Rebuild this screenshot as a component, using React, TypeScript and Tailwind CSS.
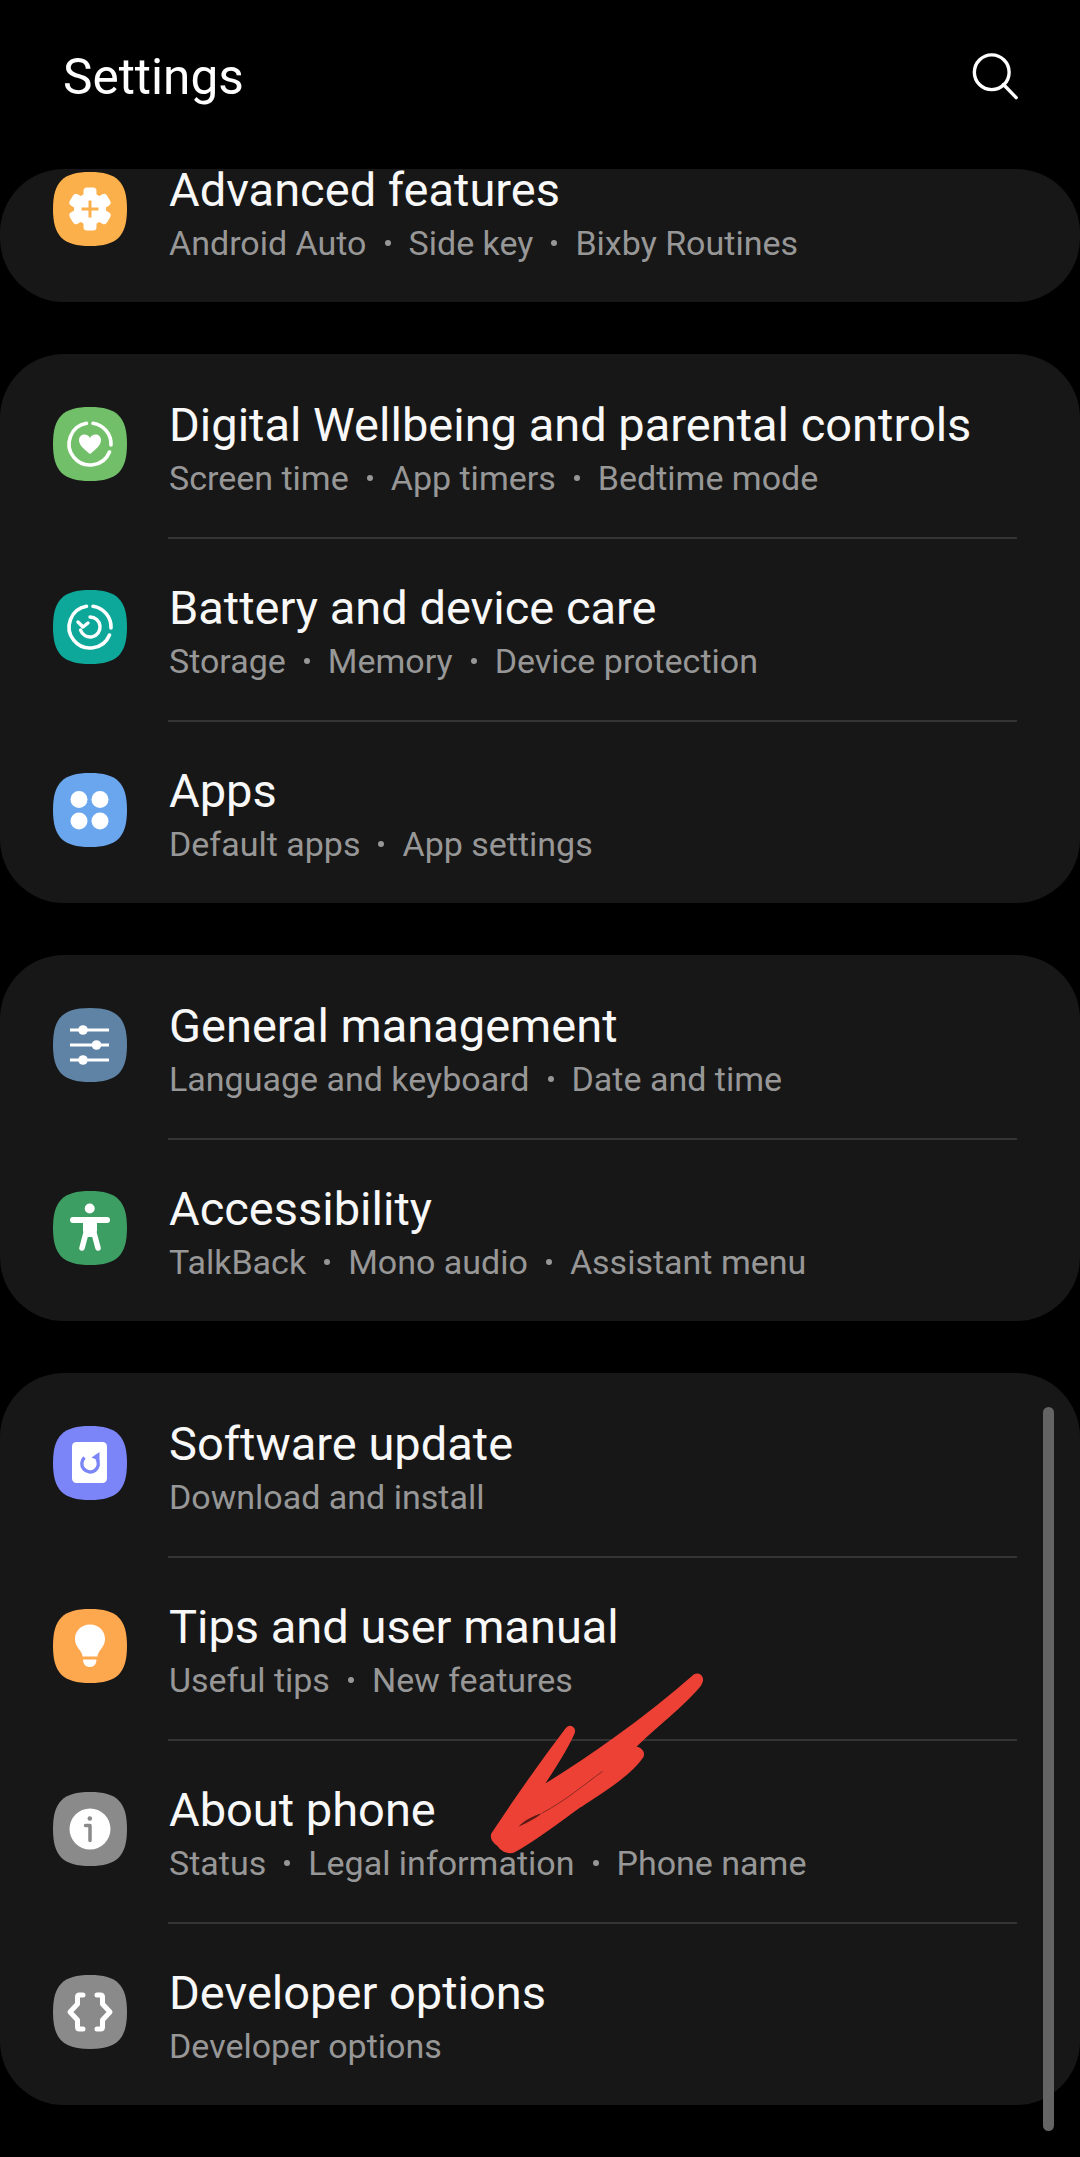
import type { ReactNode } from "react";

type Row = {
  title: string;
  sub: string[];
  icon: ReactNode;
};

function Squircle({ color, children }: { color: string; children?: ReactNode }) {
  return (
    <svg width="74" height="74" viewBox="0 0 74 74" className="mb-[3px] shrink-0">
      <path
        d="M37 0C64 0 74 10 74 37C74 64 64 74 37 74C10 74 0 64 0 37C0 10 10 0 37 0Z"
        fill={color}
      />
      {children}
    </svg>
  );
}

const ring = (
  <g fill="none" stroke="#fff" strokeWidth="3.6" strokeLinecap="round">
    <path d="M40 16.200A21 21 0 0 1 58 38" />
    <path d="M56.500 45A21 21 0 1 1 33.500 16.300" />
  </g>
);

const advancedIcon = (
  <Squircle color="#fbb04b">
    <g fill="#fff">
      <circle cx="37" cy="37" r="16" />
      {[0, 60, 120, 180, 240, 300].map((a) => (
        <rect key={a} x="30.500" y="15.500" width="13" height="13" rx="3.500" transform={`rotate(${a} 37 37)`} />
      ))}
    </g>
    <path d="M37 28.500V45.500M28.500 37H45.500" stroke="#fbb04b" strokeWidth="3" />
  </Squircle>
);

const wellbeingIcon = (
  <Squircle color="#72bf69">
    {ring}
    <path
      d="M37 47C31 42 26 38.500 26 33C26 29.500 28.800 27.500 31.500 27.500C33.800 27.500 36 28.800 37 31C38 28.800 40.200 27.500 42.500 27.500C45.200 27.500 48 29.500 48 33C48 38.500 43 42 37 47Z"
      fill="#fff"
    />
  </Squircle>
);

const batteryIcon = (
  <Squircle color="#0da899">
    {ring}
    <g fill="none" stroke="#fff" strokeWidth="3.400" strokeLinecap="round" strokeLinejoin="round">
      <path d="M37 27A10 10 0 1 1 27.500 40" />
      <path d="M25 32L30 37L35 33" />
    </g>
  </Squircle>
);

const appsIcon = (
  <Squircle color="#6aa6ee">
    <g fill="#fff">
      <circle cx="26" cy="26.500" r="8.500" />
      <circle cx="47" cy="26.500" r="8.500" />
      <circle cx="26" cy="48" r="8.500" />
      <circle cx="47" cy="48" r="8.500" />
    </g>
  </Squircle>
);

const generalIcon = (
  <Squircle color="#5e83a5">
    <g stroke="#fff" strokeWidth="3">
      <path d="M17 22H56M17 37H56M17 52H56" />
    </g>
    <g fill="#fff">
      <circle cx="30" cy="22" r="4.800" />
      <circle cx="43.500" cy="37" r="4.800" />
      <circle cx="30" cy="52" r="4.800" />
    </g>
  </Squircle>
);

const accessibilityIcon = (
  <Squircle color="#3c9e62">
    <circle cx="36.700" cy="17.500" r="5" fill="#fff" />
    <g stroke="#fff" strokeLinecap="round" fill="none">
      <path d="M20 29H54" strokeWidth="6" />
      <path d="M33 42L29 57M41 42L45 57" strokeWidth="5.500" />
    </g>
    <path d="M30 29H44V40L41 46H33L30 40Z" fill="#fff" />
  </Squircle>
);

const softwareIcon = (
  <Squircle color="#7c85f7">
    <rect x="19" y="16" width="35" height="41" rx="4.500" fill="#fff" />
    <path d="M31.500 31.500A8.300 8.300 0 1 0 44 33" fill="none" stroke="#7c85f7" strokeWidth="3.400" />
    <path d="M38.500 31.500L46.500 26V35Z" fill="#7c85f7" />
  </Squircle>
);

const tipsIcon = (
  <Squircle color="#fda74f">
    <path
      d="M37 15.500C46 15.500 52 22 52 30C52 36 48.500 39 46 43C45 44.500 44.500 46 44.500 47.500H29.500C29.500 46 29 44.500 28 43C25.500 39 22 36 22 30C22 22 28 15.500 37 15.500Z"
      fill="#fff"
    />
    <path d="M30 50.500H43.500C43.500 55 41 58 36.800 58C32.500 58 30 55 30 50.500Z" fill="#fff" />
  </Squircle>
);

const aboutIcon = (
  <Squircle color="#8a8a8a">
    <circle cx="37" cy="37" r="20.500" fill="#fff" />
    <circle cx="36.800" cy="26.500" r="2.300" fill="#8a8a8a" />
    <path d="M32.500 33.500H37V48.500" fill="none" stroke="#8a8a8a" strokeWidth="3.500" strokeLinejoin="round" strokeLinecap="round" />
  </Squircle>
);

const developerIcon = (
  <Squircle color="#8a8a8a">
    <g fill="none" stroke="#fff" strokeWidth="5" strokeLinecap="round" strokeLinejoin="round">
      <path d="M30 20H26.500C25 20 24.500 21 24.500 22V29L17 37L24.500 45V52C24.500 53 25 54 26.500 54H30" />
      <path d="M44 20H47.500C49 20 49.500 21 49.500 22V29L57 37L49.500 45V52C49.500 53 49 54 47.500 54H44" />
    </g>
  </Squircle>
);

const groups: Row[][] = [
  [
    {
      title: "Digital Wellbeing and parental controls",
      sub: ["Screen time", "App timers", "Bedtime mode"],
      icon: wellbeingIcon,
    },
    {
      title: "Battery and device care",
      sub: ["Storage", "Memory", "Device protection"],
      icon: batteryIcon,
    },
    { title: "Apps", sub: ["Default apps", "App settings"], icon: appsIcon },
  ],
  [
    {
      title: "General management",
      sub: ["Language and keyboard", "Date and time"],
      icon: generalIcon,
    },
    {
      title: "Accessibility",
      sub: ["TalkBack", "Mono audio", "Assistant menu"],
      icon: accessibilityIcon,
    },
  ],
  [
    { title: "Software update", sub: ["Download and install"], icon: softwareIcon },
    { title: "Tips and user manual", sub: ["Useful tips", "New features"], icon: tipsIcon },
    {
      title: "About phone",
      sub: ["Status", "Legal information", "Phone name"],
      icon: aboutIcon,
    },
    { title: "Developer options", sub: ["Developer options"], icon: developerIcon },
  ],
];

function SettingsRow({ row, divider }: { row: Row; divider?: boolean }) {
  return (
    <div className="relative flex h-[183px] items-center pl-[53px]">
      {row.icon}
      <div className="ml-[42px] flex flex-col gap-[11px] pt-[12px]">
        <div className="text-[47px] leading-[42px] text-[#f8f8f8]">{row.title}</div>
        <div className="flex items-center text-[34px] leading-[42px] text-[#979797]">
          {row.sub.map((s, i) => (
            <span key={s} className="flex items-center">
              {i > 0 && <span className="mx-[18px] size-[6px] rounded-full bg-[#979797]" />}
              {s}
            </span>
          ))}
        </div>
      </div>
      {divider && (
        <div className="absolute right-[63px] -bottom-[2px] left-[168px] h-[2px] bg-[#343434]" />
      )}
    </div>
  );
}

export default function App() {
  return (
    <div className="relative h-[2157px] w-[1080px] overflow-hidden bg-black font-['Roboto',sans-serif]">
      <header className="flex h-[154px] items-center justify-between pr-[61px] pl-[63px]">
        <h1 className="text-[49.5px] font-normal text-white">Settings</h1>
        <svg width="47" height="48" viewBox="0 0 50 50" fill="none" stroke="#fff" strokeWidth="3.600" strokeLinecap="round" className="mb-[3px]">
          <circle cx="21" cy="21" r="18.500" />
          <path d="M33.500 34L47 48" />
        </svg>
      </header>

      <div className="mt-[15px] flex flex-col gap-[52px]">
        {/* first card is scrolled, its row starts above the card top */}
        <section className="h-[133px] rounded-[64px] bg-[#171717]">
          <div className="-mt-[50px]">
            <SettingsRow
              row={{
                title: "Advanced features",
                sub: ["Android Auto", "Side key", "Bixby Routines"],
                icon: advancedIcon,
              }}
            />
          </div>
        </section>

        {groups.map((rows) => (
          <section key={rows[0].title} className="rounded-[64px] bg-[#171717]">
            {rows.map((row, i) => (
              <SettingsRow key={row.title} row={row} divider={i < rows.length - 1} />
            ))}
          </section>
        ))}
      </div>

      {/* scrollbar */}
      <div className="absolute top-[1407px] left-[1043px] h-[724px] w-[11px] rounded-full bg-[#646464]" />

      {/* red hand drawn arrow */}
      <svg className="absolute top-[1650px] left-[470px]" width="260" height="230" viewBox="0 0 780 690">
        <path
          d="M66 552C120 470 210 340 290 235C300 225 316 232 312 248C290 300 250 360 218 408C340 335 520 210 672 76C690 66 704 84 692 104C640 170 560 225 494 292C510 292 524 304 518 320C480 375 400 425 330 470C260 520 190 575 130 606C110 610 92 600 84 586C72 578 62 566 66 552Z"
          fill="#ee4136"
          stroke="#ee4136"
          strokeWidth="5"
          strokeLinejoin="round"
        />
        <path d="M145 530C165 510 185 500 215 490C210 497 175 518 145 530Z" fill="#5a1a15" />
        <path d="M215 490C290 450 340 405 398 364" fill="none" stroke="#8a2a22" strokeWidth="3" />
      </svg>
    </div>
  );
}
